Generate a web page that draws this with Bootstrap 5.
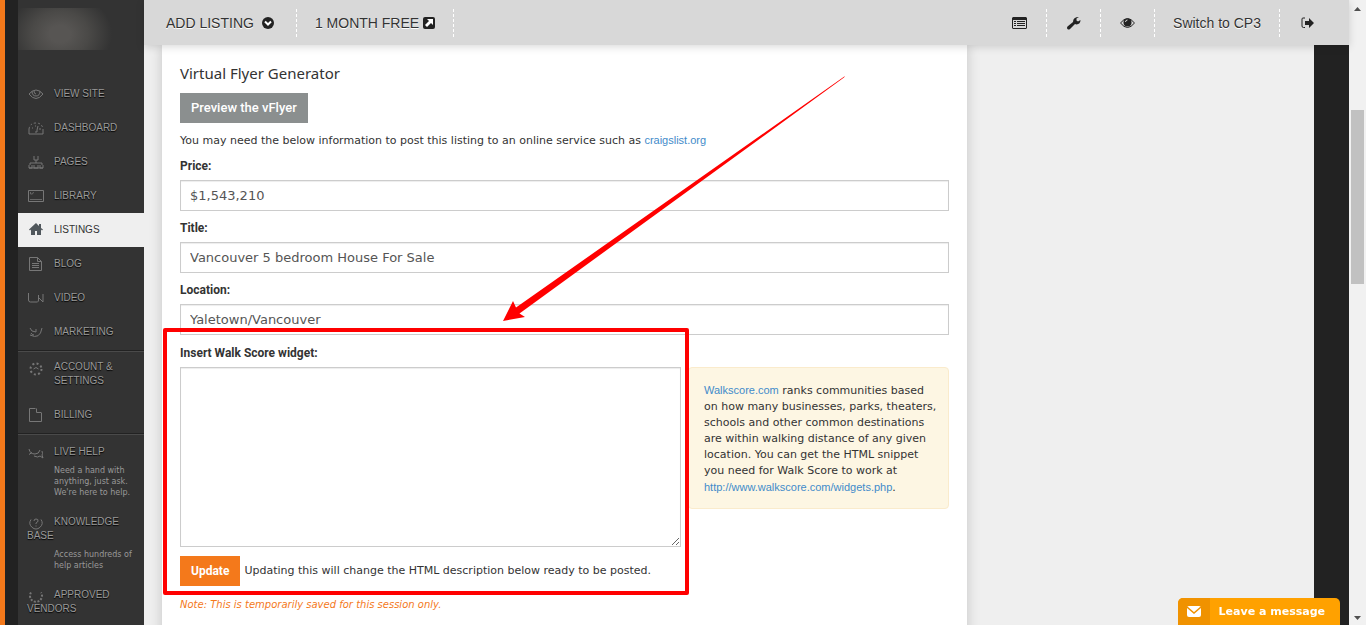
<!DOCTYPE html>
<html lang="en">
<head>
<meta charset="utf-8">
<meta name="viewport" content="width=device-width, initial-scale=1">
<title>Virtual Flyer Generator</title>
<link href="https://cdn.jsdelivr.net/npm/bootstrap@5.3.0/dist/css/bootstrap.min.css" rel="stylesheet">
<style>
  body { font: 11px/16px "DejaVu Sans", Verdana, sans-serif; color: #333; background: #222; }
  a { color: #428bca; font-family: "Liberation Sans", Arial, sans-serif; text-decoration: none; }
  .shell { border-left: 5px solid #f4791b; padding-left: 13px; }

  /* Sidebar */
  .side { flex: 0 0 126px; background: #333; }
  .brand { height: 42px; margin: 8px 0 27px; background: radial-gradient(ellipse 52px 42px at 42px 26px, #575553 20%, #4a4947 55%, #333 100%); }
  .side-link { display: block; padding: 10px 5px 10px 9px; font-size: 10px; line-height: 14px; color: #999; text-transform: uppercase; text-shadow: 0 1px 1px #000; }
  .side-link svg { width: 18px; height: 14px; margin-right: 9px; vertical-align: top; overflow: visible; fill: none; stroke: #777; }
  .side-link.current { background: #efefef; color: #333; text-shadow: none; }
  .side-link.current svg { fill: #50575c; stroke: none; }
  .side-link.two-line { padding: 8px 5px 10px 36px; text-indent: -27px; }
  .side-rule { height: 2px; margin: 1px 0 0; border: 0; opacity: 1; border-top: 1px solid #222; border-bottom: 1px solid #4a4a4a; }
  .side-note { margin: -4px 0 7px 36px; font-size: 8px; line-height: 11px; color: #999; white-space: nowrap; }

  /* Top bar */
  .topbar { min-height: 45px; background: #d8d8d8; box-shadow: 0 2px 8px rgba(0,0,0,.15); z-index: 2; padding-right: 15px; }
  .topbar a { color: #333; font-size: 14px; line-height: 18px; text-shadow: 0 1px 0 #fff; }
  .topbar svg { fill: #222; }
  .cell { display: flex; align-items: center; justify-content: center; min-height: 28px; border-right: 1px dashed #fff; }
  .cell a { display: flex; align-items: center; }
  .tool { width: 54px; }
  .cell-add { padding: 0 22px; gap: 12px; }
  .cell-free { padding: 0 18px; }
  .cell:last-child { border-right: 0; }

  /* Content */
  .work { background: #efefef; margin-right: 35px; padding: 0 347px 0 18px; }
  .sheet { background: #fff; padding: 18px; box-shadow: 0 0 12px rgba(0,0,0,.18); }
  .sheet h1 { font: 400 15px/20px "Noto Sans", "Open Sans", sans-serif; margin-bottom: 10px; }
  .sheet label { display: block; font: 700 12px/20px Roboto, sans-serif; margin-bottom: 4px; }
  .sheet .btn { border: 0; border-radius: 0; color: #fff; padding: 5px 11px; height: 30px; }
  .btn.preview { background: #8b8f8f; font: 500 13px/18px Roboto, sans-serif; }
  .btn.update { background: #f4791b; font: 700 12px/18px Roboto, sans-serif; }
  .lead-in { line-height: 20px; margin: 7px 0 5px; }
  .sheet .form-control { height: 31px; padding: 4px 9px; font-size: 13px; color: #555; border: 1px solid #ccc; border-radius: 0; margin-bottom: 7px; box-shadow: inset 0 1px 1px rgba(0,0,0,.075); }
  .sheet textarea.form-control { height: 180px; margin-bottom: 9px; resize: both; }
  .widget-row { margin-top: 8px; }
  .highlight::after { content: ""; position: absolute; inset: -15px -8px -9px -17px; border: 4px solid #f00; border-radius: 2px; pointer-events: none; }
  .tip { flex: 0 0 261px; margin: 24px 0 0 7px; padding: 14px 8px 12px 15px; background: #fdf6e3; border: 1px solid #faebcc; border-radius: 4px; }
  .note { font-size: 10px; font-style: italic; color: #f4791b; margin-top: 11px; }
  .pointer { left: 341px; top: 31px; pointer-events: none; }

  /* Chat tab and scroll bar */
  .chat { right: 26px; bottom: 0; height: 27px; border: 0; padding: 0; background: #ffa100; color: #fff; border-radius: 5px 5px 0 0; overflow: hidden; font-weight: bold; z-index: 3; }
  .chat-icon { width: 32px; background: #f09200; }
  .chat-text { padding: 0 15px 0 9px; }
  .scroll { flex: 0 0 17px; background: #f1f1f1; padding: 7px 2px 5px; }
  .scroll svg { display: block; margin: 0 auto; fill: #505050; }
  .thumb { height: 174px; margin-top: 99px; background: #c1c1c1; }
  @media (max-width: 1100px) { .work { padding-right: 18px; margin-right: 0; } }
</style>
</head>
<body>
<div class="shell d-flex vh-100 overflow-hidden">
  <nav class="side" aria-label="Main">
    <div class="brand"></div>
    <a class="side-link" href="#"><svg viewBox="0 0 18 14"><path d="M2 7q7-8 14 0q-7 9-14 0M5 4q0 5 4 5t4-5M7 4q0 3 2 3"/></svg>View site</a>
    <a class="side-link" href="#"><svg viewBox="0 0 18 14"><path d="M2 8v5h14V8" /><path d="M2 8Q3 2 9 2t7 6" stroke-dasharray="2 2"/><path d="M8 11h2V9l1-4M5 7h1M12 8h2M8 5h1"/></svg>Dashboard</a>
    <a class="side-link" href="#"><svg viewBox="0 0 18 14"><path d="M7 1v4h4V1M9 5v3M3 10V8h12v2M2 10v3h3v-3M7 10v3h4v-3M13 10v3h3v-3M2 13h14"/></svg>Pages</a>
    <a class="side-link" href="#"><svg viewBox="0 0 18 14"><path d="M1.500 1.500h15v11h-15z"/><path d="M3.500 3v2h2l1-2M3 10.500h12" stroke="#666"/></svg>Library</a>
    <a class="side-link current" href="#" aria-current="page"><svg viewBox="0 0 18 14"><path d="M2 6.500L9 0l3 3V1h2v4l2 1.500l-1 1l-1-1V12h-4V8H8v4H4V6.500l-1 1z"/></svg>Listings</a>
    <a class="side-link" href="#"><svg viewBox="0 0 18 14"><path d="M2.500 .5h8l4 4v9h-12zM10.500 .5v4h4M5 6.500h7M5 8.500h7M5 10.500h7"/></svg>Blog</a>
    <a class="side-link" href="#"><svg viewBox="0 0 18 14"><path d="M1.500 2v7q0 2 2 2h7q1-.5 1-2V4M12 7l4 4V3"/></svg>Video</a>
    <a class="side-link" href="#"><svg viewBox="0 0 18 14"><path d="M3 10q10 5 12-7M3 3q1 4 6 4V4M4 8q1 2 3 2"/></svg>Marketing</a>
    <hr class="side-rule">
    <a class="side-link two-line" href="#"><svg viewBox="0 0 18 14"><circle cx="9" cy="9" r="5.500" stroke-width="2" stroke-dasharray="2 2.300"/><path d="M6.500 9q2.500-3 5 0"/></svg>Account &amp; Settings</a>
    <a class="side-link" href="#"><svg viewBox="0 0 18 14"><path d="M2.500 .5v13h12V5M2.500 .5h6M9.500 .5v4h5"/></svg>Billing</a>
    <hr class="side-rule">
    <a class="side-link" href="#"><svg viewBox="0 0 18 14"><path d="M2 4q1 5 6 5q4 0 5-4M2 9.500l3-2M7 11q4 2 6 0l3 2l-1-3q1-1 0-4"/></svg>Live help</a>
    <p class="side-note">Need a hand with<br>anything, just ask.<br>We're here to help.</p>
    <a class="side-link" href="#"><svg viewBox="0 0 18 14"><path d="M4 4.500a6 6 0 1 0 10 0M7 6q0-2 2-2q2.500 0 2 2q0 1-2 2v1M9 10.500v1"/></svg>Knowledge Base</a>
    <p class="side-note">Access hundreds of<br>help articles</p>
    <a class="side-link" href="#"><svg viewBox="0 0 18 14"><path d="M4 4.500a6 6 0 1 0 10 0" stroke-width="2" stroke-dasharray="2 1.500"/></svg>Approved Vendors</a>
  </nav>

  <div class="d-flex flex-column flex-grow-1">
    <header class="topbar position-relative d-flex align-items-center">
      <div class="cell cell-add"><a href="#">ADD LISTING
        <svg class="ms-2" width="12" height="12" viewBox="0 0 12 12"><circle cx="6" cy="6" r="6"/><path d="M3 4.500l3 3l3-3" fill="none" stroke="#fff" stroke-width="2"/></svg></a></div>
      <div class="cell cell-free"><a href="#">1 MONTH FREE
        <svg class="ms-1" width="12" height="12" viewBox="0 0 12 12"><rect width="12" height="12" rx="2"/><path d="M4 2h6v6L8 6L4 10L2 8l4-4z" fill="#fff"/></svg></a></div>
      <nav class="d-flex ms-auto" aria-label="Tools">
        <div class="cell tool"><a href="#" aria-label="List"><svg width="15" height="12" viewBox="0 0 15 12"><path fill-rule="evenodd" d="M1 0h13l1 1v10l-1 1H1l-1-1V1zM1 3v8h13V3zM2 4h2v1H2zM5 4h8v1H5zM2 6h2v1H2zM5 6h8v1H5zM2 8h2v1H2zM5 8h8v1H5z"/></svg></a></div>
        <div class="cell tool"><a href="#" aria-label="Settings"><svg width="14" height="14" viewBox="0 0 14 14"><path d="M12 1L9.500 2.500v2l1.500 1L13.500 4q0 4-4 4.500L8 8L3 13q-1.500 1-2.500 0t0-2.500L6 6q0-5 6-5z"/></svg></a></div>
        <div class="cell tool"><a href="#" aria-label="Preview"><svg width="15" height="12" viewBox="0 0 15 12"><path d="M.5 6q7-9 14 0q-7 9-14 0z" fill="none" stroke="#222"/><circle cx="7.500" cy="5.500" r="4"/><path d="M5.500 5q0-2 2-2" fill="none" stroke="#d8d8d8"/></svg></a></div>
        <div class="cell cell-free"><a href="#">Switch to CP3</a></div>
        <div class="cell tool"><a href="#" aria-label="Sign out"><svg width="13" height="12" viewBox="0 0 13 12"><path d="M4 1H2Q1 1 1 2v7q0 1.500 1.500 1.500H4" fill="none" stroke="#222"/><path d="M4 4h4V1l5 5l-5 5V8H4z"/></svg></a></div>
      </nav>
    </header>

    <main class="work flex-grow-1 d-flex">
      <form class="sheet position-relative flex-grow-1" onsubmit="return false">
        <h1>Virtual Flyer Generator</h1>
        <button type="button" class="btn preview">Preview the vFlyer</button>
        <p class="lead-in">You may need the below information to post this listing to an online service such as <a href="#">craigslist.org</a></p>
        <label for="price">Price:</label>
        <input id="price" class="form-control" type="text" value="$1,543,210">
        <label for="title">Title:</label>
        <input id="title" class="form-control" type="text" value="Vancouver 5 bedroom House For Sale">
        <label for="location">Location:</label>
        <input id="location" class="form-control" type="text" value="Yaletown/Vancouver">
        <div class="widget-row d-flex align-items-start">
          <div class="highlight position-relative flex-grow-1">
            <label for="widget">Insert Walk Score widget:</label>
            <textarea id="widget" class="form-control"></textarea>
            <div class="d-flex align-items-center gap-1">
              <button type="submit" class="btn update">Update</button>
              <span>Updating this will change the HTML description below ready to be posted.</span>
            </div>
          </div>
          <aside class="tip"><a href="#">Walkscore.com</a> ranks communities based on how many businesses, parks, theaters, schools and other common destinations are within walking distance of any given location. You can get the HTML snippet you need for Walk Score to work at <a href="#">http://www.walkscore.com/widgets.php</a>.</aside>
        </div>
        <p class="note">Note: This is temporarily saved for this session only.</p>
        <svg class="pointer position-absolute" width="343" height="245" viewBox="0 0 343 245" fill="#f00" aria-hidden="true"><path d="M342 0L341 1.500L16.500 237.500L22 241L0 245L10 225L13 231.500z"/></svg>
      </form>
    </main>
  </div>

  <div class="scroll d-flex flex-column" aria-hidden="true">
    <svg width="7" height="4" viewBox="0 0 7 4"><path d="M0 4L3.500 0L7 4z"/></svg>
    <div class="thumb"></div>
    <svg class="mt-auto" width="7" height="4" viewBox="0 0 7 4"><path d="M0 0h7L3.500 4z"/></svg>
  </div>
</div>

<button type="button" class="chat position-fixed d-flex align-items-stretch">
  <span class="chat-icon d-flex align-items-center justify-content-center"><svg width="14" height="11" viewBox="0 0 14 11"><rect width="14" height="11" rx="2" fill="#fff"/><path d="M0 1l7 6l7-6" fill="none" stroke="#f09200" stroke-width="1.500"/></svg></span>
  <span class="chat-text align-self-center">Leave a message</span>
</button>
<script src="https://cdn.jsdelivr.net/npm/bootstrap@5.3.0/dist/js/bootstrap.bundle.min.js"></script>
</body>
</html>
